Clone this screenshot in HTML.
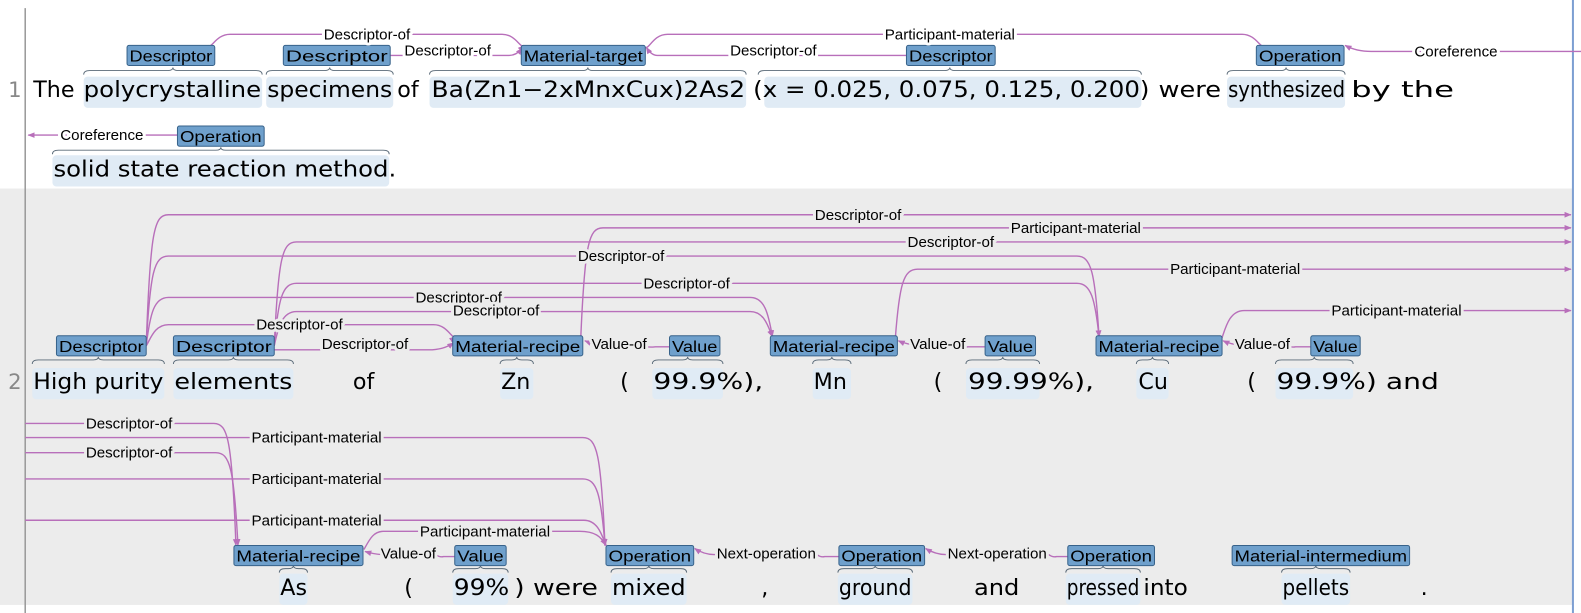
<!DOCTYPE html>
<html><head><meta charset="utf-8">
<style>
html,body{margin:0;padding:0;background:#fff;}
svg{display:block;}
.t{font-family:"DejaVu Sans","Liberation Sans",sans-serif;font-size:22px;fill:#000;}
.ln{font-family:"DejaVu Sans","Liberation Sans",sans-serif;font-size:21px;fill:#888;}
.bx{fill:#6fa0cc;stroke:#37628a;stroke-width:1;}
.bt{font-family:"Liberation Sans",Arial,sans-serif;font-size:16px;fill:#000;}
.al{font-family:"Liberation Sans",Arial,sans-serif;font-size:15px;fill:#000;paint-order:stroke;stroke-width:6px;stroke-linejoin:round;}
.w .al{stroke:#fff;} .g .al{stroke:#ececec;}
.arc{fill:none;stroke:#b86fba;stroke-width:1.4;}
.br{fill:none;stroke:#5a6a78;stroke-width:0.9;}
.hl{fill:#e0ebf5;}
</style></head><body>
<svg width="1581" height="613" viewBox="0 0 1568 608" preserveAspectRatio="none" xmlns="http://www.w3.org/2000/svg">
<defs>
<marker id="ar" viewBox="0 0 10 10" refX="9" refY="5" markerWidth="7" markerHeight="7" orient="auto" markerUnits="userSpaceOnUse"><path d="M0,1 L10,5 L0,9 z" fill="#b86fba"/></marker>
</defs>
<rect x="0" y="0" width="1568" height="608" fill="#fff"/>
<rect x="0" y="187" width="1561" height="413" fill="#ececec"/>
<line x1="25" y1="8" x2="25" y2="608" stroke="#999" stroke-width="1.5"/>
<line x1="1560" y1="0" x2="1560" y2="608" stroke="#7d9fd2" stroke-width="2"/>
<g id="hl"></g>
<g id="br"></g>
<g id="arcs"></g>

<g class="w">
<text class="ln" x="8" y="96">1</text>
<text class="t" x="33" y="96">The</text>
<text class="t" x="83" y="96" textLength="176" lengthAdjust="spacingAndGlyphs">polycrystalline</text>
<text class="t" x="265" y="96" textLength="124" lengthAdjust="spacingAndGlyphs">specimens</text>
<text class="t" x="394" y="96">of</text>
<text class="t" x="428" y="96" textLength="311" lengthAdjust="spacingAndGlyphs">Ba(Zn1−2xMnxCux)2As2</text>
<text class="t" x="747" y="96" textLength="393" lengthAdjust="spacingAndGlyphs">(x = 0.025, 0.075, 0.125, 0.200)</text>
<text class="t" x="1149" y="96" textLength="62" lengthAdjust="spacingAndGlyphs">were</text>
<text class="t" x="1218" y="96" textLength="116" lengthAdjust="spacingAndGlyphs">synthesized</text>
<text class="t" x="1340" y="96" textLength="102" lengthAdjust="spacingAndGlyphs">by the</text>
<text class="t" x="53" y="175" textLength="340" lengthAdjust="spacingAndGlyphs">solid state reaction method.</text>
</g>
<g>
<text class="ln" x="8" y="386">2</text>
<text class="t" x="33" y="386" textLength="129" lengthAdjust="spacingAndGlyphs">High purity</text>
<text class="t" x="173" y="386" textLength="117" lengthAdjust="spacingAndGlyphs">elements</text>
<text class="t" x="350" y="386">of</text>
<text class="t" x="497" y="386">Zn</text>
<text class="t" x="615" y="386">(</text>
<text class="t" x="648" y="386" textLength="109" lengthAdjust="spacingAndGlyphs">99.9%),</text>
<text class="t" x="807" y="386">Mn</text>
<text class="t" x="926" y="386">(</text>
<text class="t" x="960" y="386" textLength="125" lengthAdjust="spacingAndGlyphs">99.99%),</text>
<text class="t" x="1129" y="386">Cu</text>
<text class="t" x="1237" y="386">(</text>
<text class="t" x="1266" y="386" textLength="161" lengthAdjust="spacingAndGlyphs">99.9%) and</text>
<text class="t" x="278" y="590">As</text>
<text class="t" x="401" y="590">(</text>
<text class="t" x="450" y="590" textLength="55" lengthAdjust="spacingAndGlyphs">99%</text>
<text class="t" x="510" y="590" textLength="83" lengthAdjust="spacingAndGlyphs">) were</text>
<text class="t" x="607" y="590" textLength="73" lengthAdjust="spacingAndGlyphs">mixed</text>
<text class="t" x="755" y="590">,</text>
<text class="t" x="832" y="590" textLength="72" lengthAdjust="spacingAndGlyphs">ground</text>
<text class="t" x="966" y="590" textLength="45" lengthAdjust="spacingAndGlyphs">and</text>
<text class="t" x="1058" y="590" textLength="72" lengthAdjust="spacingAndGlyphs">pressed</text>
<text class="t" x="1134" y="590" textLength="44" lengthAdjust="spacingAndGlyphs">into</text>
<text class="t" x="1272" y="590" textLength="66" lengthAdjust="spacingAndGlyphs">pellets</text>
<text class="t" x="1409" y="590">.</text>
</g>

<g id="boxes"></g>

<g class="w">
<text class="al" x="364" y="39" text-anchor="middle">Descriptor-of</text>
<text class="al" x="444" y="55" text-anchor="middle">Descriptor-of</text>
<text class="al" x="767" y="55" text-anchor="middle">Descriptor-of</text>
<text class="al" x="942" y="39" text-anchor="middle">Participant-material</text>
<text class="al" x="1444" y="56" text-anchor="middle">Coreference</text>
<text class="al" x="101" y="139" text-anchor="middle">Coreference</text>
</g>
<g class="g">
<text class="al" x="851" y="218" text-anchor="middle">Descriptor-of</text>
<text class="al" x="1067" y="231" text-anchor="middle">Participant-material</text>
<text class="al" x="943" y="245" text-anchor="middle">Descriptor-of</text>
<text class="al" x="616" y="259" text-anchor="middle">Descriptor-of</text>
<text class="al" x="1225" y="272" text-anchor="middle">Participant-material</text>
<text class="al" x="681" y="286" text-anchor="middle">Descriptor-of</text>
<text class="al" x="455" y="300" text-anchor="middle">Descriptor-of</text>
<text class="al" x="492" y="313" text-anchor="middle">Descriptor-of</text>
<text class="al" x="297" y="327" text-anchor="middle">Descriptor-of</text>
<text class="al" x="362" y="346" text-anchor="middle">Descriptor-of</text>
<text class="al" x="614" y="346" text-anchor="middle">Value-of</text>
<text class="al" x="930" y="346" text-anchor="middle">Value-of</text>
<text class="al" x="1252" y="346" text-anchor="middle">Value-of</text>
<text class="al" x="1385" y="313" text-anchor="middle">Participant-material</text>
<text class="al" x="128" y="425" text-anchor="middle">Descriptor-of</text>
<text class="al" x="314" y="439" text-anchor="middle">Participant-material</text>
<text class="al" x="128" y="454" text-anchor="middle">Descriptor-of</text>
<text class="al" x="314" y="480" text-anchor="middle">Participant-material</text>
<text class="al" x="314" y="521" text-anchor="middle">Participant-material</text>
<text class="al" x="481" y="532" text-anchor="middle">Participant-material</text>
<text class="al" x="405" y="554" text-anchor="middle">Value-of</text>
<text class="al" x="760" y="554" text-anchor="middle">Next-operation</text>
<text class="al" x="989" y="554" text-anchor="middle">Next-operation</text>
</g>
</svg>
<script>
var NS="http://www.w3.org/2000/svg";
function el(g,tag,attrs,txt){var e=document.createElementNS(NS,tag);for(var k in attrs)e.setAttribute(k,attrs[k]);if(txt)e.textContent=txt;document.getElementById(g).appendChild(e);return e;}
var H=[[83,260,76],[264,390,76],[426,740,76],[758,1132,76],[1217,1334,76],[52,386,154],
[32,163,365],[172,291,365],[496,529,365],[647,717,365],[806,844,365],[958,1031,365],[1127,1159,365],[1265,1342,365],
[277,305,569],[449,504,569],[606,681,569],[831,905,569],[1057,1131,569],[1271,1339,569]];
H.forEach(function(h){el("hl","rect",{x:h[0],y:h[2],width:h[1]-h[0],height:31,rx:4,"class":"hl"});});
var B=[[83,260,70],[264,390,70],[426,740,70],[752,1132,70],[1217,1334,70],[52,386,149],
[32,163,357],[172,291,357],[496,529,357],[647,717,357],[806,844,357],[958,1031,357],[1127,1159,357],[1265,1342,357],
[277,305,564],[449,504,564],[606,681,564],[831,905,564],[1057,1131,564],[1271,1339,564]];
B.forEach(function(b){var a=b[0],c=b[1],y=b[2],m=(a+c)/2;
el("br","path",{"class":"br",d:"M"+a+" "+(y+4)+" Q"+a+" "+y+" "+(a+6)+" "+y+" L"+(m-5)+" "+y+" Q"+m+" "+y+" "+m+" "+(y-3)+" Q"+m+" "+y+" "+(m+5)+" "+y+" L"+(c-6)+" "+y+" Q"+c+" "+y+" "+c+" "+(y+4)});});
var X=[[126,213,45,"Descriptor"],[281,387,45,"Descriptor"],[517,640,45,"Material-target"],[899,987,45,"Descriptor"],[1246,1333,45,"Operation"],
[176,262,125,"Operation"],
[56,145,333,"Descriptor"],[172,272,333,"Descriptor"],[449,578,333,"Material-recipe"],[664,714,333,"Value"],[764,890,333,"Material-recipe"],[977,1027,333,"Value"],[1087,1212,333,"Material-recipe"],[1300,1349,333,"Value"],
[232,360,541,"Material-recipe"],[451,502,541,"Value"],[601,688,541,"Operation"],[832,917,541,"Operation"],[1059,1145,541,"Operation"],[1222,1398,541,"Material-intermedium"]];
X.forEach(function(b){el("boxes","rect",{x:b[0],y:b[2],width:b[1]-b[0],height:20,rx:2,"class":"bx"});
el("boxes","text",{x:(b[0]+b[1])/2,y:b[2]+16,"text-anchor":"middle","class":"bt",textLength:(b[1]-b[0]-5),lengthAdjust:"spacingAndGlyphs"},b[3]);});
function P(d,arrow){var a={"class":"arc",d:d};if(arrow)a["marker-end"]="url(#ar)";el("arcs","path",a);}
function arc(x1,y1,x2,y2,L){var s=x2>x1?1:-1;
P("M"+x1+" "+y1+" C"+(x1+s*4)+" "+(L+15)+" "+(x1+s*8)+" "+L+" "+(x1+s*22)+" "+L+" L"+(x2-s*22)+" "+L+" C"+(x2-s*8)+" "+L+" "+(x2-s*4)+" "+(L+15)+" "+x2+" "+y2,true);}
function toEdge(x1,y1,L){P("M"+x1+" "+y1+" C"+(x1+4)+" "+(L+15)+" "+(x1+8)+" "+L+" "+(x1+22)+" "+L+" L1558 "+L,true);}
function fromLeft(L,x2,y2){P("M25 "+L+" L"+(x2-22)+" "+L+" C"+(x2-8)+" "+L+" "+(x2-4)+" "+(L+15)+" "+x2+" "+y2,true);}
arc(206,45,520,45,34);
P("M387 55 L505 55 Q512 55 518 48",true);
P("M899 55 L652 55 Q646 55 641 47",true);
arc(640,47,1254,45,34);
P("M1568 51 L1360 51 Q1345 51 1334 45",true);
P("M176 134 L28 134",true);
toEdge(145,343,213);
toEdge(576,335,226);
toEdge(272,343,240);
arc(145,343,1090,334,254);
toEdge(888,335,267);
arc(272,343,1090,334,281);
arc(145,343,766,334,295);
arc(272,343,766,334,309);
arc(145,343,452,334,322);
P("M272 347 L425 347 Q440 347 450 340",true);
P("M664 344 L650 344 Q640 345 636 342 L600 342 Q590 342 580 338",true);
P("M977 344 L960 344 Q955 345 950 342 L910 342 Q900 342 891 338",true);
P("M1300 344 L1285 344 Q1280 345 1275 342 L1230 342 Q1222 342 1213 338",true);
toEdge(1212,335,308);
fromLeft(420,234,541);
fromLeft(434,600,541);
fromLeft(449,236,541);
fromLeft(475,600,541);
fromLeft(516,601,541);
P("M361 545 C366 536 370 527 380 527 L575 527 C590 527 596 532 601 541",true);
P("M451 552 L440 552 Q436 553 432 550 L380 550 Q372 550 362 547",true);
P("M832 552 L818 552 Q814 553 810 550 L708 550 Q698 550 689 544",true);
P("M1059 552 L1048 552 Q1044 553 1040 550 L938 550 Q928 550 918 544",true);
</script>
</body></html>
